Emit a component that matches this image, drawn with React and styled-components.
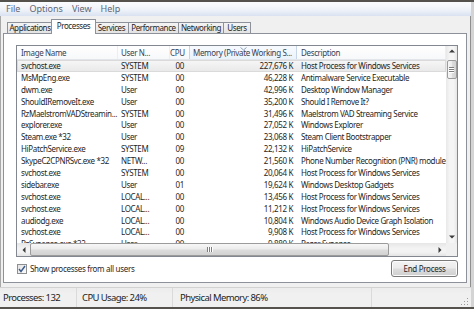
import React from 'react';
import styled, { createGlobalStyle, css } from 'styled-components';

const FONT = `"Noto Sans", "Open Sans", sans-serif`;

const Global = createGlobalStyle`
  html, body { margin: 0; padding: 0; background: #f0f0f0; }
  body { font-family: ${FONT}; }
  #root { width: 474px; height: 309px; overflow: hidden; }
`;

const Window = styled.div`
  position: relative;
  width: 474px;
  height: 309px;
  display: flex;
  flex-direction: column;
  background: #f0f0f0;
  font-family: ${FONT};
  color: #1e1e1e;
  overflow: hidden;
  box-shadow: inset 1px 0 0 #a8a8a8, inset -3px 0 0 #d4d4d4, inset -4px 0 0 #8e8e8e;
`;

const TopFrame = styled.div`
  height: 2px;
  background: #55524d;
`;

const MenuBar = styled.div`
  height: 14px;
  display: flex;
  align-items: center;
  gap: 9px;
  padding-left: 6px;
  margin-right: 3px;
  background: linear-gradient(#fbfcfe 0%, #eff3f9 55%, #d9e2f1 100%);
  font-size: 9px;
  letter-spacing: 0;
  color: #5f6878;
`;

const MenuItem = styled.span`
  line-height: 14px;
`;

const TabStrip = styled.div`
  height: 18px;
  margin-bottom: -1px;
  display: flex;
  align-items: flex-end;
  padding-left: 7px;
  position: relative;
  z-index: 2;
`;

const Tab = styled.div`
  box-sizing: border-box;
  width: ${p => p.$w}px;
  height: 11px;
  margin-bottom: 1px;
  margin-left: -1px;
  border: 1px solid #8d9199;
  border-bottom: none;
  background: linear-gradient(#f4f4f4, #e3e3e3);
  font-size: 8px;
  letter-spacing: -0.4px;
  line-height: 10px;
  text-align: center;
  white-space: nowrap;
  color: #1e1e1e;
  &:first-child { margin-left: 0; }
  ${p => p.$active && css`
    height: 15px;
    margin: 0 -2px 0 -2px;
    background: #ffffff;
    line-height: 12px;
    position: relative;
    z-index: 3;
  `}
  ${p => p.$afterActive && css`margin-left: 0;`}
`;

const Panel = styled.div`
  box-sizing: border-box;
  height: 250px;
  margin: 0 7px 0 3px;
  border: 1px solid #8d9199;
  background: #ffffff;
  padding: 11px 8px 5px 12px;
  display: flex;
  flex-direction: column;
  position: relative;
  z-index: 1;
`;

const ListView = styled.div`
  box-sizing: border-box;
  height: 212px;
  border: 1px solid #828790;
  display: flex;
  background: #fff;
`;

const ListMain = styled.div`
  flex: 1;
  min-width: 0;
  display: flex;
  flex-direction: column;
`;

const COLS = '101px 52px 20px 107px 1fr';

const HeaderRow = styled.div`
  height: 14px;
  display: grid;
  grid-template-columns: ${COLS};
  background: linear-gradient(#ffffff, #f7f8fa);
  border-bottom: 1px solid #e2e5ea;
  box-sizing: border-box;
`;

const HeaderCell = styled.div`
  position: relative;
  font-size: 8px;
  letter-spacing: -0.35px;
  line-height: 14px;
  color: #364254;
  white-space: nowrap;
  overflow: hidden;
  padding: ${p => (p.$right ? '0 6px 0 0' : `0 0 0 ${p.$pl ?? 4}px`)};
  text-align: ${p => (p.$right ? 'right' : 'left')};
  border-right: 1px solid #eceef1;
  ${p => p.$sorted && css`
    background: linear-gradient(#f7fbfe, #eaf3fb);
    border-left: 1px solid #c6d6e6;
    border-right: 1px solid #c6d6e6;
    margin-left: -1px;
  `}
`;

const SortArrow = styled.svg`
  position: absolute;
  left: 50%;
  top: 1px;
  margin-left: -3px;
`;

const Body = styled.div`
  flex: 1;
  overflow: hidden;
`;

const Row = styled.div`
  box-sizing: border-box;
  height: 11.9px;
  display: grid;
  grid-template-columns: ${COLS};
  font-size: 8px;
  letter-spacing: -0.36px;
  line-height: 11.9px;
  color: #1f1f1f;
  ${p => p.$selected && css`
    background: linear-gradient(#f7f7f7, #e8e8e8);
    box-shadow: inset 0 0 0 1px #dadada;
  `}
`;

const Cell = styled.div`
  white-space: nowrap;
  overflow: hidden;
  padding: ${p => (p.$right ? `0 ${p.$pr}px 0 0` : `0 0 0 ${p.$pl}px`)};
  text-align: ${p => (p.$right ? 'right' : 'left')};
`;

const HScroll = styled.div`
  height: 13px;
  display: flex;
  background: linear-gradient(#e6e6e6, #f3f3f3 40%, #f3f3f3 70%, #e4e4e4);
`;

const ScrollBtn = styled.div`
  width: ${p => p.$w || 13}px;
  height: ${p => p.$h || 13}px;
  flex-shrink: 0;
  display: flex;
  align-items: center;
  justify-content: center;
`;

const HThumb = styled.div`
  box-sizing: border-box;
  width: 359px;
  height: 13px;
  border: 1px solid #9b9b9b;
  border-radius: 2px;
  background: linear-gradient(#f7f7f7, #ececec 45%, #dcdcdc 55%, #d2d2d2);
  display: flex;
  align-items: center;
  justify-content: center;
  flex-shrink: 0;
`;

const Grip = styled.div`
  display: flex;
  flex-direction: ${p => (p.$vertical ? 'column' : 'row')};
  gap: 1px;
  & > span {
    display: block;
    width: ${p => (p.$vertical ? '5px' : '1px')};
    height: ${p => (p.$vertical ? '1px' : '5px')};
    background: #7d7d7d;
    box-shadow: ${p => (p.$vertical ? '0 1px 0 #fff' : '1px 0 0 #fff')};
  }
`;

const HTrack = styled.div`
  flex: 1;
`;

const VScroll = styled.div`
  width: 11px;
  display: flex;
  flex-direction: column;
  background: linear-gradient(to right, #e8e8e8, #f5f5f5 35%, #f5f5f5 70%, #e6e6e6);
`;

const VTrack = styled.div`
  flex: 1;
  display: flex;
  flex-direction: column;
  align-items: center;
  padding-top: 4px;
`;

const VThumb = styled.div`
  box-sizing: border-box;
  width: 10px;
  height: 19px;
  border: 1px solid #9b9b9b;
  border-radius: 2px;
  background: linear-gradient(to right, #f7f7f7, #ececec 45%, #dcdcdc 55%, #d2d2d2);
  display: flex;
  align-items: center;
  justify-content: center;
`;

const Corner = styled.div`
  height: 13px;
  background: #f0f0f0;
`;

const Footer = styled.div`
  margin-top: 3px;
  height: 17px;
  display: flex;
  align-items: center;
  justify-content: space-between;
  padding-left: 1px;
`;

const CheckLabel = styled.label`
  display: flex;
  align-items: center;
  gap: 3px;
  font-size: 8px;
  letter-spacing: -0.3px;
  color: #1f1f1f;
`;

const CheckBox = styled.span`
  box-sizing: border-box;
  width: 10px;
  height: 10px;
  border: 1px solid #8e8f8f;
  background: linear-gradient(135deg, #e4e4e4, #fbfbfb);
  display: flex;
  align-items: center;
  justify-content: center;
`;

const Button = styled.button`
  box-sizing: border-box;
  width: 67px;
  height: 17px;
  padding: 0;
  border: 1px solid #7a7a7a;
  border-radius: 3px;
  background: linear-gradient(#f3f3f3, #ebebeb 48%, #dddddd 52%, #cfcfcf);
  box-shadow: inset 0 0 0 1px #fbfbfb;
  font-family: ${FONT};
  font-size: 8px;
  letter-spacing: -0.3px;
  color: #1f1f1f;
`;

const StatusBar = styled.div`
  margin-top: 4px;
  height: 20px;
  box-sizing: border-box;
  border-top: 1px solid #d2d2d2;
  display: flex;
  align-items: center;
  position: relative;
  margin-right: 3px;
  background: linear-gradient(#ececec, #f0f0f0 30%);
`;

const StatusSection = styled.div`
  box-sizing: border-box;
  width: ${p => (p.$w ? `${p.$w}px` : 'auto')};
  flex: ${p => (p.$w ? 'none' : '1')};
  height: 100%;
  padding-left: ${p => p.$pl}px;
  border-right: ${p => (p.$w ? '1px solid #dadada' : 'none')};
  font-size: 9.5px;
  letter-spacing: -0.6px;
  line-height: 19px;
  color: #1e1e1e;
  white-space: nowrap;
`;

const SizeGrip = styled.svg`
  position: absolute;
  right: 2px;
  bottom: 1px;
`;

const BottomFrame = styled.div`
  height: 2px;
  background: #55524d;
`;

const Arrow = ({ dir }) => {
  const pts = {
    up: '0,3 3,0 6,3',
    down: '0,0 3,3 6,0',
    left: '3,0 0,3 3,6',
    right: '0,0 3,3 0,6',
  }[dir];
  const vertical = dir === 'up' || dir === 'down';
  return (
    <svg width={vertical ? 6 : 4} height={vertical ? 4 : 6} viewBox={vertical ? '0 0 6 3' : '0 0 3 6'}>
      <polygon points={pts} fill="#3c3c3c" />
    </svg>
  );
};

const tabs = [
  { label: 'Applications', w: 46 },
  { label: 'Processes', w: 45, active: true },
  { label: 'Services', w: 35 },
  { label: 'Performance', w: 51 },
  { label: 'Networking', w: 46 },
  { label: 'Users', w: 28 },
];

const rows = [
  ['svchost.exe', 'SYSTEM', '00', '227,676 K', 'Host Process for Windows Services'],
  ['MsMpEng.exe', 'SYSTEM', '00', '46,228 K', 'Antimalware Service Executable'],
  ['dwm.exe', 'User', '00', '42,996 K', 'Desktop Window Manager'],
  ['ShouldIRemoveIt.exe', 'User', '00', '35,200 K', 'Should I Remove It?'],
  ['RzMaelstromVADStreamin...', 'SYSTEM', '00', '31,496 K', 'Maelstrom VAD Streaming Service'],
  ['explorer.exe', 'User', '00', '27,052 K', 'Windows Explorer'],
  ['Steam.exe *32', 'User', '00', '23,068 K', 'Steam Client Bootstrapper'],
  ['HiPatchService.exe', 'SYSTEM', '09', '22,132 K', 'HiPatchService'],
  ['SkypeC2CPNRSvc.exe *32', 'NETW...', '00', '21,560 K', 'Phone Number Recognition (PNR) module'],
  ['svchost.exe', 'SYSTEM', '00', '20,064 K', 'Host Process for Windows Services'],
  ['sidebar.exe', 'User', '01', '19,624 K', 'Windows Desktop Gadgets'],
  ['svchost.exe', 'LOCAL...', '00', '13,456 K', 'Host Process for Windows Services'],
  ['svchost.exe', 'LOCAL...', '00', '11,212 K', 'Host Process for Windows Services'],
  ['audiodg.exe', 'LOCAL...', '00', '10,804 K', 'Windows Audio Device Graph Isolation'],
  ['svchost.exe', 'LOCAL...', '00', '9,908 K', 'Host Process for Windows Services'],
  ['RzSynapse.exe *32', 'User', '00', '9,880 K', 'Razer Synapse'],
];

export default function App() {
  return (
    <>
      <Global />
      <Window>
        <TopFrame />
        <MenuBar>
          <MenuItem>File</MenuItem>
          <MenuItem>Options</MenuItem>
          <MenuItem>View</MenuItem>
          <MenuItem>Help</MenuItem>
        </MenuBar>
        <TabStrip>
          {tabs.map((t, i) => (
            <Tab key={t.label} $w={t.w} $active={t.active} $afterActive={i > 0 && tabs[i - 1].active}>
              {t.label}
            </Tab>
          ))}
        </TabStrip>
        <Panel>
          <ListView>
            <ListMain>
              <HeaderRow>
                <HeaderCell>Image Name</HeaderCell>
                <HeaderCell $pl={3}>User N...</HeaderCell>
                <HeaderCell $right>CPU</HeaderCell>
                <HeaderCell $sorted $pl={3}>
                  <SortArrow width="7" height="4" viewBox="0 0 7 4">
                    <polyline points="0.5,0.5 3.5,3 6.5,0.5" fill="none" stroke="#8ea0b8" strokeWidth="1" />
                  </SortArrow>
                  Memory (Private Working S...
                </HeaderCell>
                <HeaderCell>Description</HeaderCell>
              </HeaderRow>
              <Body>
                {rows.map((r, i) => (
                  <Row key={i} $selected={i === 0}>
                    <Cell $pl={4}>{r[0]}</Cell>
                    <Cell $pl={3}>{r[1]}</Cell>
                    <Cell $right $pr={6}>{r[2]}</Cell>
                    <Cell $right $pr={4}>{r[3]}</Cell>
                    <Cell $pl={4}>{r[4]}</Cell>
                  </Row>
                ))}
              </Body>
              <HScroll>
                <ScrollBtn><Arrow dir="left" /></ScrollBtn>
                <HThumb>
                  <Grip><span /><span /><span /></Grip>
                </HThumb>
                <HTrack />
                <ScrollBtn><Arrow dir="right" /></ScrollBtn>
              </HScroll>
            </ListMain>
            <VScroll>
              <ScrollBtn $w={11} $h={10}><Arrow dir="up" /></ScrollBtn>
              <VTrack>
                <VThumb>
                  <Grip $vertical><span /><span /><span /></Grip>
                </VThumb>
              </VTrack>
              <ScrollBtn $w={11} $h={13}><Arrow dir="down" /></ScrollBtn>
              <Corner />
            </VScroll>
          </ListView>
          <Footer>
            <CheckLabel>
              <CheckBox>
                <svg width="8" height="8" viewBox="0 0 8 8">
                  <polyline points="1,4 3,6.5 7,1" fill="none" stroke="#3b5a8c" strokeWidth="1.4" />
                </svg>
              </CheckBox>
              Show processes from all users
            </CheckLabel>
            <Button>End Process</Button>
          </Footer>
        </Panel>
        <StatusBar>
          <StatusSection $w={77} $pl={3}>Processes: 132</StatusSection>
          <StatusSection $w={96} $pl={5}>CPU Usage: 24%</StatusSection>
          <StatusSection $w={199} $pl={7}>Physical Memory: 86%</StatusSection>
          <StatusSection $pl={0} />
          <SizeGrip width="8" height="8" viewBox="0 0 8 8">
            <rect x="6" y="6" width="1" height="1" fill="#9a9a9a" />
            <rect x="3" y="6" width="1" height="1" fill="#9a9a9a" />
            <rect x="6" y="3" width="1" height="1" fill="#9a9a9a" />
            <rect x="0" y="6" width="1" height="1" fill="#9a9a9a" />
            <rect x="3" y="3" width="1" height="1" fill="#9a9a9a" />
            <rect x="6" y="0" width="1" height="1" fill="#9a9a9a" />
          </SizeGrip>
        </StatusBar>
        <BottomFrame />
      </Window>
    </>
  );
}
